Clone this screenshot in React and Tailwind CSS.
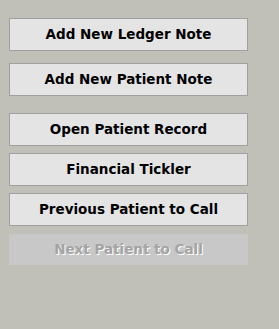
const buttons = [
  { label: 'Add New Ledger Note', mt: 'mt-[18px]' },
  { label: 'Add New Patient Note', mt: 'mt-[12px]' },
  { label: 'Open Patient Record', mt: 'mt-[17px]' },
  { label: 'Financial Tickler', mt: 'mt-[7px]' },
  { label: 'Previous Patient to Call', mt: 'mt-[7px]' },
];

export default function App() {
  return (
    <div className="w-[279px] h-[329px] bg-[#c0c0b8] pl-[9px] flex flex-col font-['DejaVu_Sans',Verdana,sans-serif]">
      {buttons.map((b) => (
        <button
          key={b.label}
          className={`${b.mt} w-[239px] h-[33px] bg-[#e4e4e4] border border-[#a0a0a0] text-[13.5px] font-bold text-black flex items-center justify-center pb-[1px]`}
        >
          {b.label}
        </button>
      ))}
      <button
        disabled
        className="mt-[8px] w-[239px] h-[31px] bg-[#c8c8c8] text-[13.5px] font-bold text-[#a4a4a4] flex items-center justify-center [text-shadow:1px_1px_0_#ffffff]"
      >
        Next Patient to Call
      </button>
    </div>
  );
}
